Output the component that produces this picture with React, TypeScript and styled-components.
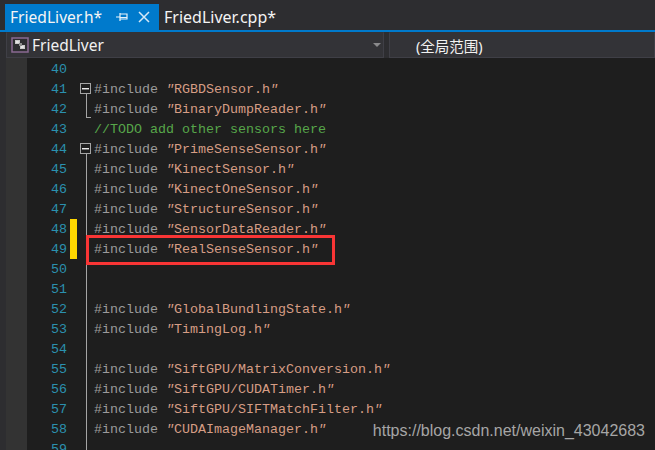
import React from "react";
import styled, { createGlobalStyle } from "styled-components";

const Global = createGlobalStyle`
  html, body { margin: 0; padding: 0; background: #2d2d30; }
  body { width: 655px; height: 450px; overflow: hidden; }
`;

const Page = styled.div`
  position: relative;
  width: 655px;
  height: 450px;
  overflow: hidden;
  display: flex;
  flex-direction: column;
  background: #2d2d30;
  font-family: "Noto Sans", "Noto Sans CJK SC", sans-serif;
`;

const TabStrip = styled.div`
  height: 26px;
  padding: 4px 0 0 5px;
  display: flex;
  flex: none;
  border-bottom: 2px solid #007acc;
`;

const Tab = styled.div<{ $active?: boolean }>`
  width: ${(p) => (p.$active ? "154px" : "auto")};
  height: 26px;
  padding-left: 5px;
  box-sizing: border-box;
  display: flex;
  align-items: center;
  background: ${(p) => (p.$active ? "#007acc" : "transparent")};
  color: #f4f4f4;
  font-size: ${(p) => (p.$active ? "15.6px" : "16px")};
  line-height: 26px;
`;

const TabLabel = styled.span`
  width: 105px;
  flex: none;
`;

const PinIcon = styled.svg`
  width: 14px;
  height: 14px;
  flex: none;
  margin-right: 8px;
`;

const NavBar = styled.div`
  height: 26px;
  flex: none;
  margin-left: 6px;
  display: flex;
  gap: 5px;
  background: #2d2d30;
`;

const NavBox = styled.div<{ $wide?: boolean }>`
  width: ${(p) => (p.$wide ? "378px" : "266px")};
  flex: none;
  height: 26px;
  box-sizing: border-box;
  display: flex;
  align-items: center;
  background: #333337;
  border: 1px solid #3f3f46;
  border-top-color: #333337;
  color: #f1f1f1;
  font-size: 15.5px;
`;

const ClassIcon = styled.svg`
  width: 18px;
  height: 16px;
  margin: 0 3px 0 4px;
  flex: none;
`;

const Arrow = styled.span`
  margin-left: auto;
  margin-right: 2px;
  width: 0;
  height: 0;
  border-left: 4px solid transparent;
  border-right: 4px solid transparent;
  border-top: 4px solid #8a8a8c;
`;

const ScopeLabel = styled.span`
  margin-left: 26px;
  font-size: 14.5px;
`;

const Editor = styled.div`
  flex: 1;
  display: flex;
  min-height: 0;
  margin-left: 6px;
  background: #1e1e1e;
  padding-top: 1px;
  box-shadow: inset 21px 0 0 #333333;
`;

const Lines = styled.div`
  display: flex;
  flex-direction: column;
`;

const Row = styled.div`
  height: 20px;
  flex: none;
  display: flex;
  align-items: stretch;
`;

const LineNumber = styled.div`
  width: 61px;
  flex: none;
  text-align: right;
  color: #2b91af;
  font: 13.33px/22px "Liberation Mono", monospace;
`;

const ChangeCell = styled.div<{ $changed?: boolean }>`
  width: 7px;
  margin-left: 3px;
  flex: none;
  background: ${(p) => (p.$changed ? "#ffd700" : "transparent")};
`;

const FoldCell = styled.div`
  position: relative;
  width: 14px;
  margin-left: 3px;
  flex: none;
`;

const FoldBox = styled.div`
  position: absolute;
  left: 0;
  top: 4px;
  width: 9px;
  height: 9px;
  border: 1px solid #a5a5a5;
  &::after {
    content: "";
    position: absolute;
    left: 1px;
    right: 1px;
    top: 4px;
    height: 1px;
    background: #e8e8e8;
    box-shadow: 0 1px 0 #777;
  }
`;

const FoldLine = styled.div<{ $end?: boolean; $start?: boolean }>`
  position: absolute;
  left: 6px;
  top: ${(p) => (p.$start ? "15px" : "0")};
  bottom: ${(p) => (p.$end ? "1px" : "0")};
  width: 1px;
  background: #a5a5a5;
  &::after {
    content: "";
    display: ${(p) => (p.$end ? "block" : "none")};
    position: absolute;
    left: 0;
    bottom: 0;
    width: 5px;
    height: 1px;
    background: #a5a5a5;
  }
`;

const Code = styled.div`
  flex: none;
  white-space: pre;
  font: 13.33px/22px "Liberation Mono", monospace;
  color: #9b9b9b;
`;

const Comment = styled.span`
  color: #57a64a;
`;

const Str = styled.span`
  color: #d69d85;
`;

const Quote = styled.span`
  font-style: italic;
`;

const Highlight = styled.div`
  position: absolute;
  left: 86px;
  top: 235px;
  width: 243px;
  height: 24px;
  border: 3px solid #f93535;
`;

const Watermark = styled.div`
  position: absolute;
  right: 10px;
  top: 422px;
  color: #a6a6a6;
  font: 16px/18px "Liberation Sans", Arial, sans-serif;
  white-space: nowrap;
`;

type Fold = "box" | "line" | "end" | null;
const rows: { n: number; inc?: string; comment?: string; fold?: Fold; changed?: boolean }[] = [
  { n: 40 },
  { n: 41, inc: "RGBDSensor.h", fold: "box" },
  { n: 42, inc: "BinaryDumpReader.h", fold: "end" },
  { n: 43, comment: "//TODO add other sensors here" },
  { n: 44, inc: "PrimeSenseSensor.h", fold: "box" },
  { n: 45, inc: "KinectSensor.h", fold: "line" },
  { n: 46, inc: "KinectOneSensor.h", fold: "line" },
  { n: 47, inc: "StructureSensor.h", fold: "line" },
  { n: 48, inc: "SensorDataReader.h", fold: "line", changed: true },
  { n: 49, inc: "RealSenseSensor.h", fold: "line", changed: true },
  { n: 50, fold: "line" },
  { n: 51, fold: "line" },
  { n: 52, inc: "GlobalBundlingState.h", fold: "line" },
  { n: 53, inc: "TimingLog.h", fold: "line" },
  { n: 54, fold: "line" },
  { n: 55, inc: "SiftGPU/MatrixConversion.h", fold: "line" },
  { n: 56, inc: "SiftGPU/CUDATimer.h", fold: "line" },
  { n: 57, inc: "SiftGPU/SIFTMatchFilter.h", fold: "line" },
  { n: 58, inc: "CUDAImageManager.h", fold: "line" },
  { n: 59, fold: "line" },
];

export default function App() {
  return (
    <Page>
      <Global />
      <TabStrip>
        <Tab $active>
          <TabLabel>FriedLiver.h*</TabLabel>
          <PinIcon viewBox="0 0 14 14" fill="none" stroke="#e8f3fb" strokeWidth="1.2">
            <path d="M1 7h4M5 3v8M5 4h7v5H5M5 7.5h7" />
          </PinIcon>
          <PinIcon viewBox="0 0 14 14" fill="none" stroke="#d5e9f7" strokeWidth="1.5">
            <path d="M2 2l10 10M12 2L2 12" />
          </PinIcon>
        </Tab>
        <Tab>FriedLiver.cpp*</Tab>
      </TabStrip>
      <NavBar>
        <NavBox $wide>
          <ClassIcon viewBox="0 0 18 16">
            <rect x="1" y="1" width="16" height="14" fill="#2d2d30" stroke="#8a6a92" strokeWidth="1.5" />
            <path d="M4 3h5v4h-5zM9 8h5v4h-5z" fill="#c8c8c8" />
            <path d="M6 4v2M11 9v2M5 5h3M10 10h3" stroke="#f0f0f0" strokeWidth="1" />
            <path d="M8 6h3v3h-3z" fill="#8c8c8c" />
          </ClassIcon>
          FriedLiver
          <Arrow />
        </NavBox>
        <NavBox>
          <ScopeLabel>(全局范围)</ScopeLabel>
        </NavBox>
      </NavBar>
      <Editor>
        <Lines>
          {rows.map((r) => (
            <Row key={r.n}>
              <LineNumber>{r.n}</LineNumber>
              <ChangeCell $changed={r.changed} />
              <FoldCell>
                {r.fold === "box" && <FoldBox />}
                {r.fold === "box" && <FoldLine $start />}
                {(r.fold === "line" || r.fold === "end") && <FoldLine $end={r.fold === "end"} />}
              </FoldCell>
              <Code>
                {r.inc && (
                  <>
                    #include{" "}
                    <Str>
                      <Quote>"</Quote>
                      {r.inc}
                      <Quote>"</Quote>
                    </Str>
                  </>
                )}
                {r.comment && <Comment>{r.comment}</Comment>}
              </Code>
            </Row>
          ))}
        </Lines>
      </Editor>
      <Highlight />
      <Watermark>https://blog.csdn.net/weixin_43042683</Watermark>
    </Page>
  );
}
